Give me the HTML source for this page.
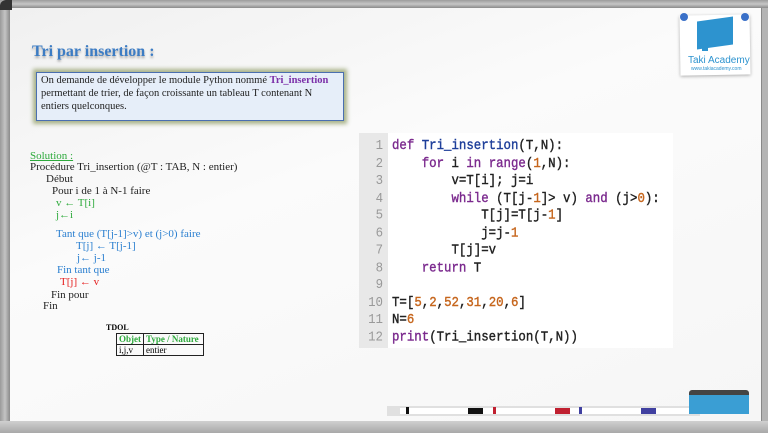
<!DOCTYPE html>
<html><head><meta charset="utf-8"><style>
*{margin:0;padding:0;box-sizing:border-box}
body{width:768px;height:433px;overflow:hidden;background:#b4b4b4;position:relative;font-family:"Liberation Serif",serif}
.board{position:absolute;left:9px;top:7px;width:753px;height:414px;background:linear-gradient(160deg,#f0f0f0 0%,#fbfbfb 40%,#f6f6f6 100%);border-right:1px solid #888}
.frameL{position:absolute;left:0;top:0;width:10px;height:425px;background:linear-gradient(90deg,#9a9a9a,#c4c4c4,#8a8a8a);border-radius:4px 0 0 4px}
.frameT{position:absolute;left:0;top:0;width:768px;height:8px;background:linear-gradient(#9c9c9c,#c6c6c6,#8a8a8a)}
.corner{position:absolute;left:0;top:0;width:12px;height:10px;background:#333;border-radius:6px 0 0 0}
.bottom{position:absolute;left:0;top:421px;width:768px;height:12px;background:linear-gradient(#d0d0d0,#a8a8a8)}
.t{position:absolute;white-space:nowrap}
.title{left:32px;top:43px;font-size:16px;font-weight:bold;color:#3c7cc4;text-shadow:0 2px 2px #aaa}
.box{position:absolute;left:36px;top:72px;width:308px;height:49px;background:#e6eef9;border:1px solid #4a6fb0;box-shadow:0 0 4px 3px #a9b38a;font-size:10.5px;line-height:13px;padding:1px 4px;color:#222}
.code{position:absolute;left:359px;top:133px;width:314px;height:215px;background:#fff}
.gut{position:absolute;left:0;top:0;width:29px;height:215px;background:#e8e8e8}
.code pre{position:absolute;top:5px;font-family:"Liberation Mono",monospace;font-size:12.4px;line-height:15.55px;transform:scaleY(1.12);transform-origin:0 0;-webkit-text-stroke:0.35px currentColor}
.ln{left:4px;color:#999;text-align:right;width:20px;-webkit-text-stroke:0!important}
.src{left:33px;color:#222}
.k{color:#7b2a8e}.f{color:#1e3f9a}.n{color:#c6661d}
.ps{font-size:11px;color:#222}
.g{color:#2eaa3c}.b{color:#2a7fd0}.r{color:#e52020}
table{position:absolute;left:116px;top:333px;border-collapse:collapse;font-size:9px}
td{border:1px solid #222;padding:0 2px;height:11px}
</style></head><body>
<div class="board"></div>
<div class="frameT"></div><div class="frameL"></div><div class="corner"></div>
<div class="bottom"></div>
<div style="position:absolute;left:387px;top:406px;width:313px;height:10px;background:#e0e0e0"></div>
<div style="position:absolute;left:400px;top:408px;width:290px;height:6px;background:#fff"></div>
<div style="position:absolute;left:406px;top:407px;width:3px;height:7px;background:#111"></div>
<div style="position:absolute;left:468px;top:408px;width:15px;height:6px;background:#111"></div>
<div style="position:absolute;left:493px;top:407px;width:3px;height:7px;background:#c02030"></div>
<div style="position:absolute;left:555px;top:408px;width:15px;height:6px;background:#c02030"></div>
<div style="position:absolute;left:579px;top:407px;width:3px;height:7px;background:#4040a0"></div>
<div style="position:absolute;left:641px;top:408px;width:15px;height:6px;background:#4040a0"></div>
<div style="position:absolute;left:689px;top:390px;width:60px;height:24px;background:#3a9ed4;border-top:5px solid #444;border-radius:3px 3px 0 0"></div>
<div style="position:absolute;left:680px;top:15px;width:70px;height:60px;background:#fff;box-shadow:0 1px 3px #aaa;transform:rotate(-1deg)"></div>
<div style="position:absolute;left:680px;top:13px;width:8px;height:8px;border-radius:50%;background:#3a70c8"></div>
<div style="position:absolute;left:741px;top:13px;width:8px;height:8px;border-radius:50%;background:#3a70c8"></div>
<div style="position:absolute;left:697px;top:19px;width:36px;height:28px;background:#2d93cf;transform:skewY(-8deg)"></div>
<div style="position:absolute;left:702px;top:45px;width:6px;height:6px;background:#2d93cf"></div>
<div class="t" style="left:688px;top:55px;font-family:'Liberation Sans',sans-serif;font-size:10px;color:#2d93cf">Taki Academy</div>
<div class="t" style="left:691px;top:66px;font-family:'Liberation Sans',sans-serif;font-size:5px;color:#2d93cf">www.takiacademy.com</div>

<div class="t title">Tri par insertion :</div>
<div class="box">On demande de développer le module Python nommé <b style="color:#7b2fa8">Tri_insertion</b><br>permettant de trier, de façon croissante un tableau T contenant N<br>entiers quelconques.</div>

<div class="t ps g" style="left:30px;top:150px;text-decoration:underline">Solution :</div>
<div class="t ps" style="left:30px;top:161px">Procédure Tri_insertion (@T : TAB, N : entier)</div>
<div class="t ps" style="left:46px;top:173px">Début</div>
<div class="t ps" style="left:52px;top:185px">Pour i de 1 à N-1 faire</div>
<div class="t ps g" style="left:56px;top:197px">v ← T[i]</div>
<div class="t ps g" style="left:56px;top:209px">j←i</div>
<div class="t ps b" style="left:56px;top:228px">Tant que (T[j-1]&gt;v) et (j&gt;0) faire</div>
<div class="t ps b" style="left:76px;top:240px">T[j] ← T[j-1]</div>
<div class="t ps b" style="left:77px;top:252px">j← j-1</div>
<div class="t ps b" style="left:57px;top:264px">Fin tant que</div>
<div class="t ps r" style="left:60px;top:276px">T[j] ← v</div>
<div class="t ps" style="left:51px;top:289px">Fin pour</div>
<div class="t ps" style="left:43px;top:300px">Fin</div>
<div class="t" style="left:106px;top:323px;font-size:8px;font-weight:bold">TDOL</div>
<table><tr><td class="g" style="font-weight:bold">Objet</td><td class="g" style="font-weight:bold;width:60px">Type / Nature</td></tr><tr><td>i,j,v</td><td>entier</td></tr></table>

<div class="code"><div class="gut"></div>
<pre class="ln">1
2
3
4
5
6
7
8
9
10
11
12</pre>
<pre class="src"><span class="k">def</span> <span class="f">Tri_insertion</span>(T,N):
    <span class="k">for</span> i <span class="k">in</span> <span class="k">range</span>(<span class="n">1</span>,N):
        v=T[i]; j=i
        <span class="k">while</span> (T[j-<span class="n">1</span>]&gt; v) <span class="k">and</span> (j&gt;<span class="n">0</span>):
            T[j]=T[j-<span class="n">1</span>]
            j=j-<span class="n">1</span>
        T[j]=v
    <span class="k">return</span> T

T=[<span class="n">5</span>,<span class="n">2</span>,<span class="n">52</span>,<span class="n">31</span>,<span class="n">20</span>,<span class="n">6</span>]
N=<span class="n">6</span>
<span class="k">print</span>(Tri_insertion(T,N))</pre></div>
</body></html>
